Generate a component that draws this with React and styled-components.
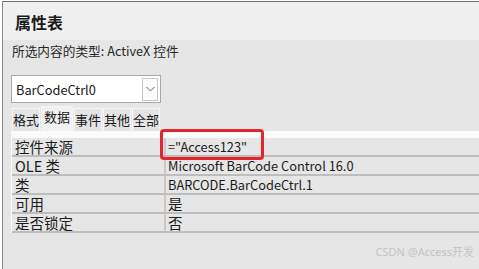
import React from "react";
import styled, { createGlobalStyle } from "styled-components";

const Global = createGlobalStyle`
  html, body { margin: 0; padding: 0; background: #ffffff; }
  body { width: 479px; height: 269px; overflow: hidden; }
  #root { width: 479px; height: 269px; }
`;

const ui = `"Noto Sans CJK SC", sans-serif`;

const Page = styled.div`
  width: 479px;
  height: 269px;
  padding: 1px 0 0 2px;
  box-sizing: border-box;
  position: relative;
  font-family: ${ui};
  color: #1b1b1b;
`;

const Window = styled.div`
  height: 268px;
  border-top: 1px solid #6e6e6e;
  border-left: 1px solid #8a8a8a;
  background: #e6e6e6;
  display: flex;
  flex-direction: column;
  position: relative;
`;

const TitleBar = styled.div`
  height: 38px;
  background: #f0f0f0;
  display: flex;
  align-items: center;
  padding-left: 12px;
  font-size: 16px;
  font-weight: 700;
  color: #1a1a1a;
  padding-top: 2px;
  box-sizing: border-box;
`;

const TypeLabel = styled.div`
  height: 22px;
  line-height: 22px;
  padding-left: 9px;
  font-size: 12.7px;
  color: #262626;
`;

const Combo = styled.div`
  margin: 13px 0 0 8px;
  width: 150px;
  height: 28px;
  box-sizing: border-box;
  border: 1px solid #a9a9a9;
  background: #ffffff;
  display: flex;
  align-items: center;
  justify-content: space-between;
  padding: 0 2px 0 4px;
`;

const ComboText = styled.span`
  font-size: 12.8px;
  color: #1a1a1a;
`;

const ComboButton = styled.div`
  width: 16px;
  height: 23px;
  box-sizing: border-box;
  border: 1px solid #c7c7c7;
  background: #fdfdfd;
  display: flex;
  align-items: center;
  justify-content: center;
`;

const Tabs = styled.div`
  margin: 3px 0 0 9px;
  height: 25px;
  display: flex;
  align-items: flex-end;
  gap: 1px;
`;

const Tab = styled.div`
  height: ${(p) => (p.$active ? 25 : 23)}px;
  box-sizing: border-box;
  padding: 0 ${(p) => (p.$active ? 2 : 0)}px;
  border: 1px solid #f7f7f7;
  border-bottom: none;
  background: ${(p) => (p.$active ? "#f1f1f1" : "#e4e4e4")};
  font-size: 13px;
  line-height: ${(p) => (p.$active ? 20 : 22)}px;
  color: #1a1a1a;
`;

const Panel = styled.div`
  margin: 0 0 0 8px;
  border-top: 7px solid #fbfbfb;
  border-left: 1px solid #fbfbfb;
  display: flex;
  flex-direction: column;
`;

const Row = styled.div`
  display: grid;
  grid-template-columns: 154px 1fr;
  height: 19px;
  box-sizing: border-box;
  border-bottom: 2px solid #bdbdbd;
`;

const NameCell = styled.div`
  padding-left: 3px;
  font-size: 14.5px;
  line-height: 17px;
  border-right: 2px solid #c9c9c9;
  white-space: nowrap;
  display: flex;
  align-items: center;
`;

const ValueCell = styled.div`
  padding-left: 2px;
  font-size: ${(p) => (p.$cjk ? 14.5 : 12.8)}px;
  line-height: 17px;
  white-space: nowrap;
  display: flex;
  align-items: center;
`;

const Highlight = styled.div`
  position: absolute;
  left: 160px;
  top: 129px;
  width: 104px;
  height: 31px;
  box-sizing: border-box;
  border: 3px solid #e4252b;
  border-radius: 4px;
`;

const Watermark = styled.div`
  position: absolute;
  right: 5px;
  bottom: 10px;
  font-size: 11px;
  color: #c4c4c4;
  font-family: "Noto Sans", "Noto Sans CJK SC", sans-serif;
`;

const rows = [
  ["控件来源", '="Access123"', false],
  ["OLE 类", "Microsoft BarCode Control 16.0", false],
  ["类", "BARCODE.BarCodeCtrl.1", false],
  ["可用", "是", true],
  ["是否锁定", "否", true],
];

const tabs = [
  ["格式", false],
  ["数据", true],
  ["事件", false],
  ["其他", false],
  ["全部", false],
];

export default function App() {
  return (
    <>
      <Global />
      <Page>
        <Window>
          <TitleBar>属性表</TitleBar>
          <TypeLabel>所选内容的类型: ActiveX 控件</TypeLabel>
          <Combo>
            <ComboText>BarCodeCtrl0</ComboText>
            <ComboButton>
              <svg width="9" height="6" viewBox="0 0 9 6">
                <polyline points="0.5,1 4.5,5 8.5,1" fill="none" stroke="#606060" strokeWidth="1" />
              </svg>
            </ComboButton>
          </Combo>
          <Tabs>
            {tabs.map(([t, a]) => (
              <Tab key={t} $active={a}>{t}</Tab>
            ))}
          </Tabs>
          <Panel>
            {rows.map(([n, v, c]) => (
              <Row key={n}>
                <NameCell>{n}</NameCell>
                <ValueCell $cjk={c}>{v}</ValueCell>
              </Row>
            ))}
          </Panel>
        </Window>
        <Highlight />
        <Watermark>CSDN @Access开发</Watermark>
      </Page>
    </>
  );
}
